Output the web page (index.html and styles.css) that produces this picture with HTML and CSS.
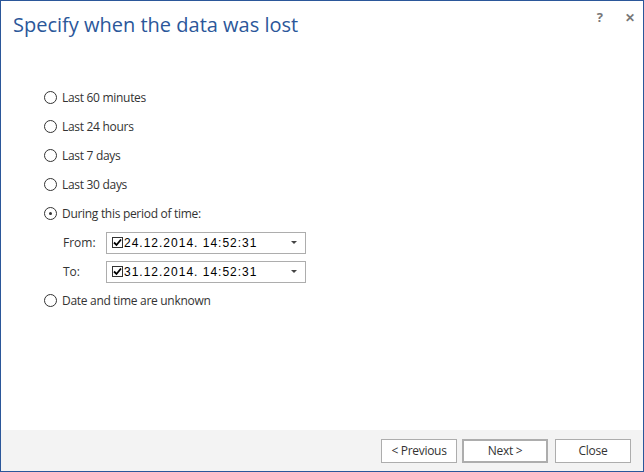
FILE: index.html
```html
<!DOCTYPE html>
<html lang="en">
<head>
    <meta charset="UTF-8">
    <title>Specify when the data was lost</title>
    <link rel="stylesheet" href="styles.css">
</head>
<body>
    <div class="dialog">
        <div class="header">
            <h1 class="title">Specify when the data was lost</h1>
            <div class="window-buttons">
                <span class="help">?</span>
                <span class="close">&#x2715;</span>
            </div>
        </div>

        <div class="content">
            <label class="option"><span class="radio"></span>Last 60 minutes</label>
            <label class="option"><span class="radio"></span>Last 24 hours</label>
            <label class="option"><span class="radio"></span>Last 7 days</label>
            <label class="option"><span class="radio"></span>Last 30 days</label>
            <label class="option"><span class="radio checked"></span>During this period of time:</label>

            <div class="period">
                <div class="period-row">
                    <span class="period-label">From:</span>
                    <div class="date-picker">
                        <span class="check">
                            <svg width="9" height="9" viewBox="0 0 9 9"><path d="M1 4.5 L3.5 7 L8 1.5" fill="none" stroke="#000" stroke-width="1.8"/></svg>
                        </span>
                        <span class="date-text">24.12.2014. 14:52:31</span>
                        <span class="arrow"></span>
                    </div>
                </div>
                <div class="period-row">
                    <span class="period-label">To:</span>
                    <div class="date-picker">
                        <span class="check">
                            <svg width="9" height="9" viewBox="0 0 9 9"><path d="M1 4.5 L3.5 7 L8 1.5" fill="none" stroke="#000" stroke-width="1.8"/></svg>
                        </span>
                        <span class="date-text">31.12.2014. 14:52:31</span>
                        <span class="arrow"></span>
                    </div>
                </div>
            </div>

            <label class="option"><span class="radio"></span>Date and time are unknown</label>
        </div>

        <div class="footer">
            <button class="btn">&lt; Previous</button>
            <button class="btn btn-default">Next &gt;</button>
            <button class="btn">Close</button>
        </div>
    </div>
</body>
</html>
```

FILE: styles.css
```css
body {
    margin: 0;
    font-family: "Open Sans", "Noto Sans", sans-serif;
    font-size: 12px;
    color: #333;
}

.dialog {
    width: 644px;
    height: 472px;
    box-sizing: border-box;
    border: 1px solid #2b579a;
    display: flex;
    flex-direction: column;
    background: #fff;
}

.header {
    display: flex;
    justify-content: space-between;
    align-items: flex-start;
    height: 82px;
}

.title {
    margin: 10px 0 0 12px;
    font-size: 20px;
    font-weight: normal;
    color: #2b579a;
}

.window-buttons {
    display: flex;
    gap: 22px;
    margin: 7px 8px 0 0;
    color: #777;
    font-weight: bold;
}

.help {
    font-size: 13px;
}

.close {
    font-size: 12px;
    line-height: 19px;
}

.content {
    flex: 1;
    padding-left: 43px;
}

.option {
    display: flex;
    align-items: center;
    height: 29px;
    letter-spacing: -0.3px;
}

.radio {
    width: 11px;
    height: 11px;
    border: 1px solid #333;
    border-radius: 50%;
    margin-right: 5px;
    position: relative;
}

.radio.checked::after {
    content: "";
    position: absolute;
    left: 4px;
    top: 4px;
    width: 3px;
    height: 3px;
    border-radius: 50%;
    background: #333;
}

.period {
    padding-left: 19px;
}

.period-row {
    display: flex;
    align-items: center;
    height: 29px;
}

.period-label {
    width: 43px;
}

.date-picker {
    width: 193px;
    height: 20px;
    border: 1px solid #adadad;
    display: flex;
    align-items: center;
    padding-left: 5px;
    color: #000;
}

.check {
    width: 9px;
    height: 9px;
    border: 1px solid #333;
    display: flex;
    align-items: center;
    justify-content: center;
    margin-right: 1px;
}

.date-text {
    flex: 1;
    font-family: "Liberation Sans", Arial, sans-serif;
    font-size: 12px;
    letter-spacing: 1px;
}

.arrow {
    width: 0;
    height: 0;
    border-left: 3px solid transparent;
    border-right: 3px solid transparent;
    border-top: 3px solid #444;
    margin-right: 8px;
}

.footer {
    height: 41px;
    background: #f3f3f3;
    display: flex;
    justify-content: flex-end;
    align-items: center;
    gap: 5px;
    padding-right: 12px;
}

.btn {
    height: 24px;
    width: 76px;
    padding: 0;
    background: #fff;
    border: 1px solid #adadad;
    font-family: inherit;
    font-size: 12px;
    letter-spacing: -0.3px;
    color: #333;
}

.btn-default {
    width: 86px;
    border: 2px solid #adadad;
    margin-right: 2px;
}
```
